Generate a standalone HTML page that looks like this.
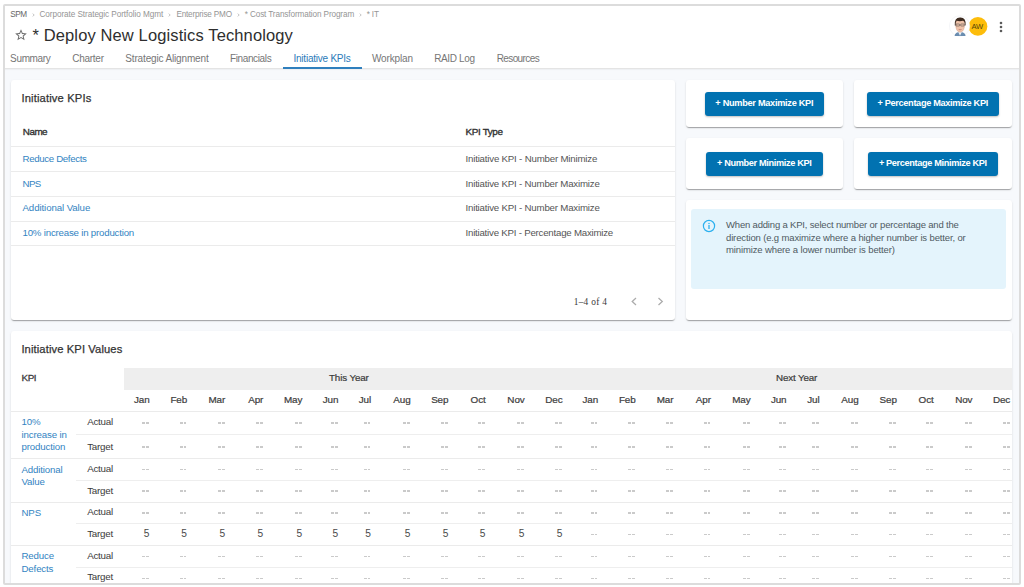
<!DOCTYPE html>
<html><head><meta charset="utf-8"><style>
html,body{margin:0;padding:0}
body{width:1024px;height:587px;overflow:hidden;position:relative;background:#fff;font-family:"Liberation Sans", sans-serif}
.t{position:absolute;white-space:pre}
</style></head><body>
<div style="position:absolute;left:5px;top:6px;width:1014px;height:577px;background:#f7f9fc"></div>
<div style="position:absolute;left:5px;top:6px;width:1014px;height:62px;background:#fff;border-bottom:1px solid #e4e4e4;box-shadow:0 1px 1px rgba(0,0,0,.035)"></div>
<div style="position:absolute;left:282.5px;top:67px;width:79px;height:2px;background:#2f7fbd"></div>
<div style="position:absolute;left:11px;top:80px;width:664px;height:240px;box-shadow:0 2px 1px -1px rgba(0,0,0,.2),0 1px 1px 0 rgba(0,0,0,.14),0 1px 3px 0 rgba(0,0,0,.08);border-radius:3px;background:#fff;"></div>
<div style="position:absolute;left:686px;top:80px;width:157px;height:47px;box-shadow:0 2px 1px -1px rgba(0,0,0,.2),0 1px 1px 0 rgba(0,0,0,.14),0 1px 3px 0 rgba(0,0,0,.08);border-radius:3px;background:#fff;"></div>
<div style="position:absolute;left:854px;top:80px;width:158px;height:47px;box-shadow:0 2px 1px -1px rgba(0,0,0,.2),0 1px 1px 0 rgba(0,0,0,.14),0 1px 3px 0 rgba(0,0,0,.08);border-radius:3px;background:#fff;"></div>
<div style="position:absolute;left:686px;top:138px;width:157px;height:51px;box-shadow:0 2px 1px -1px rgba(0,0,0,.2),0 1px 1px 0 rgba(0,0,0,.14),0 1px 3px 0 rgba(0,0,0,.08);border-radius:3px;background:#fff;"></div>
<div style="position:absolute;left:854px;top:138px;width:158px;height:51px;box-shadow:0 2px 1px -1px rgba(0,0,0,.2),0 1px 1px 0 rgba(0,0,0,.14),0 1px 3px 0 rgba(0,0,0,.08);border-radius:3px;background:#fff;"></div>
<div style="position:absolute;left:686px;top:200px;width:326px;height:120px;box-shadow:0 2px 1px -1px rgba(0,0,0,.2),0 1px 1px 0 rgba(0,0,0,.14),0 1px 3px 0 rgba(0,0,0,.08);border-radius:3px;background:#fff;"></div>
<div style="position:absolute;left:11px;top:331px;width:1001px;height:253px;box-shadow:0 2px 1px -1px rgba(0,0,0,.2),0 1px 1px 0 rgba(0,0,0,.14),0 1px 3px 0 rgba(0,0,0,.08);border-radius:3px;background:#fff;border-radius:3px 3px 0 0;"></div>
<div style="position:absolute;left:705px;top:92px;width:119px;height:24px;background:#0172b1;border-radius:3px;box-shadow:0 1px 2px rgba(0,0,0,.25);"></div>
<div style="position:absolute;left:867px;top:92px;width:132px;height:24px;background:#0172b1;border-radius:3px;box-shadow:0 1px 2px rgba(0,0,0,.25);"></div>
<div style="position:absolute;left:706px;top:152px;width:117px;height:24px;background:#0172b1;border-radius:3px;box-shadow:0 1px 2px rgba(0,0,0,.25);"></div>
<div style="position:absolute;left:868px;top:152px;width:130px;height:24px;background:#0172b1;border-radius:3px;box-shadow:0 1px 2px rgba(0,0,0,.25);"></div>
<div style="position:absolute;left:691px;top:209px;width:315px;height:80px;background:#e4f4fc;border-radius:3px"></div>
<div style="position:absolute;left:11px;top:146px;width:664px;height:1px;background:#ebebeb"></div>
<div style="position:absolute;left:11px;top:171px;width:664px;height:1px;background:#ebebeb"></div>
<div style="position:absolute;left:11px;top:196px;width:664px;height:1px;background:#ebebeb"></div>
<div style="position:absolute;left:11px;top:221px;width:664px;height:1px;background:#ebebeb"></div>
<div style="position:absolute;left:11px;top:245px;width:664px;height:1px;background:#ebebeb"></div>
<div style="position:absolute;left:124px;top:368px;width:888px;height:22px;background:#eeeeee"></div>
<div style="position:absolute;left:11px;top:411px;width:1001px;height:1px;background:#ebebeb"></div>
<div style="position:absolute;left:11px;top:458px;width:1001px;height:1px;background:#ebebeb"></div>
<div style="position:absolute;left:11px;top:502px;width:1001px;height:1px;background:#ebebeb"></div>
<div style="position:absolute;left:11px;top:545px;width:1001px;height:1px;background:#ebebeb"></div>
<div style="position:absolute;left:76px;top:434px;width:936px;height:1px;background:#eeeeee"></div>
<div style="position:absolute;left:76px;top:480px;width:936px;height:1px;background:#eeeeee"></div>
<div style="position:absolute;left:76px;top:523px;width:936px;height:1px;background:#eeeeee"></div>
<div style="position:absolute;left:76px;top:567px;width:936px;height:1px;background:#eeeeee"></div>
<div class="t" style="left:10.20px;top:10.14px;font-size:8.2px;line-height:9.84px;color:#666;font-weight:400;letter-spacing:-0.397px;">SPM</div>
<div class="t" style="left:39.50px;top:10.14px;font-size:8.2px;line-height:9.84px;color:#959595;font-weight:400;letter-spacing:-0.072px;">Corporate Strategic Portfolio Mgmt</div>
<div class="t" style="left:176.40px;top:10.14px;font-size:8.2px;line-height:9.84px;color:#959595;font-weight:400;letter-spacing:-0.200px;">Enterprise PMO</div>
<div class="t" style="left:244.70px;top:10.14px;font-size:8.2px;line-height:9.84px;color:#959595;font-weight:400;letter-spacing:-0.118px;">* Cost Transformation Program</div>
<div class="t" style="left:366.70px;top:10.14px;font-size:8.2px;line-height:9.84px;color:#959595;font-weight:400;letter-spacing:-0.165px;">* IT</div>
<div class="t" style="left:32.50px;top:26.08px;font-size:16.5px;line-height:19.8px;color:#2e2e2e;font-weight:400;letter-spacing:0.119px;">* Deploy New Logistics Technology</div>
<div class="t" style="left:10.10px;top:53.03px;font-size:10px;line-height:12.0px;color:#767676;font-weight:400;letter-spacing:-0.349px;">Summary</div>
<div class="t" style="left:72.20px;top:53.03px;font-size:10px;line-height:12.0px;color:#767676;font-weight:400;letter-spacing:-0.260px;">Charter</div>
<div class="t" style="left:125.30px;top:53.03px;font-size:10px;line-height:12.0px;color:#767676;font-weight:400;letter-spacing:-0.154px;">Strategic Alignment</div>
<div class="t" style="left:229.90px;top:53.03px;font-size:10px;line-height:12.0px;color:#767676;font-weight:400;letter-spacing:-0.359px;">Financials</div>
<div class="t" style="left:293.50px;top:53.03px;font-size:10px;line-height:12.0px;color:#2b7bb9;font-weight:400;letter-spacing:-0.235px;">Initiative KPIs</div>
<div class="t" style="left:372.00px;top:53.03px;font-size:10px;line-height:12.0px;color:#767676;font-weight:400;letter-spacing:-0.138px;">Workplan</div>
<div class="t" style="left:434.20px;top:53.03px;font-size:10px;line-height:12.0px;color:#767676;font-weight:400;letter-spacing:-0.366px;">RAID Log</div>
<div class="t" style="left:496.70px;top:53.03px;font-size:10px;line-height:12.0px;color:#767676;font-weight:400;letter-spacing:-0.602px;">Resources</div>
<div class="t" style="left:21.40px;top:91.70px;font-size:11.2px;line-height:13.44px;color:#333;font-weight:400;letter-spacing:0.151px;-webkit-text-stroke:0.25px #333;">Initiative KPIs</div>
<div class="t" style="left:22.80px;top:125.83px;font-size:9.9px;line-height:11.88px;color:#333;font-weight:400;letter-spacing:-0.517px;-webkit-text-stroke:0.35px #333;">Name</div>
<div class="t" style="left:465.60px;top:125.83px;font-size:9.9px;line-height:11.88px;color:#333;font-weight:400;letter-spacing:-0.357px;-webkit-text-stroke:0.35px #333;">KPI Type</div>
<div class="t" style="left:22.50px;top:153.12px;font-size:9.7px;line-height:11.64px;color:#3384c2;font-weight:400;letter-spacing:-0.351px;">Reduce Defects</div>
<div class="t" style="left:465.50px;top:153.12px;font-size:9.7px;line-height:11.64px;color:#555;font-weight:400;letter-spacing:-0.195px;">Initiative KPI - Number Minimize</div>
<div class="t" style="left:22.50px;top:177.77px;font-size:9.7px;line-height:11.64px;color:#3384c2;font-weight:400;letter-spacing:-0.573px;">NPS</div>
<div class="t" style="left:465.50px;top:177.77px;font-size:9.7px;line-height:11.64px;color:#555;font-weight:400;letter-spacing:-0.201px;">Initiative KPI - Number Maximize</div>
<div class="t" style="left:22.50px;top:202.42px;font-size:9.7px;line-height:11.64px;color:#3384c2;font-weight:400;letter-spacing:-0.101px;">Additional Value</div>
<div class="t" style="left:465.50px;top:202.42px;font-size:9.7px;line-height:11.64px;color:#555;font-weight:400;letter-spacing:-0.201px;">Initiative KPI - Number Maximize</div>
<div class="t" style="left:22.50px;top:227.07px;font-size:9.7px;line-height:11.64px;color:#3384c2;font-weight:400;letter-spacing:-0.204px;">10% increase in production</div>
<div class="t" style="left:465.50px;top:227.07px;font-size:9.7px;line-height:11.64px;color:#555;font-weight:400;letter-spacing:-0.224px;">Initiative KPI - Percentage Maximize</div>
<div class="t" style="left:573.70px;top:296.70px;font-size:9.4px;line-height:11.28px;color:#3a3a3a;font-weight:400;letter-spacing:0.272px;font-family:'Liberation Serif',serif;">1–4 of 4</div>
<div class="t" style="left:715.30px;top:97.79px;font-size:9.2px;line-height:11.04px;color:#fff;font-weight:700;letter-spacing:-0.284px;">+ Number Maximize KPI</div>
<div class="t" style="left:877.50px;top:97.79px;font-size:9.2px;line-height:11.04px;color:#fff;font-weight:700;letter-spacing:-0.333px;">+ Percentage Maximize KPI</div>
<div class="t" style="left:716.90px;top:157.99px;font-size:9.2px;line-height:11.04px;color:#fff;font-weight:700;letter-spacing:-0.341px;">+ Number Minimize KPI</div>
<div class="t" style="left:878.90px;top:157.99px;font-size:9.2px;line-height:11.04px;color:#fff;font-weight:700;letter-spacing:-0.356px;">+ Percentage Minimize KPI</div>
<div class="t" style="left:726.00px;top:219.11px;font-size:9.5px;line-height:11.4px;color:#4f5a62;font-weight:400;letter-spacing:-0.180px;">When adding a KPI, select number or percentage and the</div>
<div class="t" style="left:726.00px;top:231.81px;font-size:9.5px;line-height:11.4px;color:#4f5a62;font-weight:400;letter-spacing:-0.136px;">direction (e.g maximize where a higher number is better, or</div>
<div class="t" style="left:726.00px;top:244.21px;font-size:9.5px;line-height:11.4px;color:#4f5a62;font-weight:400;letter-spacing:-0.122px;">minimize where a lower number is better)</div>
<div class="t" style="left:21.40px;top:342.80px;font-size:11.2px;line-height:13.44px;color:#333;font-weight:400;letter-spacing:0.111px;-webkit-text-stroke:0.25px #333;">Initiative KPI Values</div>
<div class="t" style="left:21.50px;top:372.23px;font-size:9.9px;line-height:11.88px;color:#3c3c3c;font-weight:400;letter-spacing:-0.415px;-webkit-text-stroke:0.3px #3c3c3c;">KPI</div>
<div class="t" style="left:329.00px;top:371.62px;font-size:9.8px;line-height:11.76px;color:#3a3a3a;font-weight:400;letter-spacing:-0.134px;-webkit-text-stroke:0.2px #3a3a3a;">This Year</div>
<div class="t" style="left:776.00px;top:371.62px;font-size:9.8px;line-height:11.76px;color:#3a3a3a;font-weight:400;letter-spacing:-0.138px;-webkit-text-stroke:0.2px #3a3a3a;">Next Year</div>
<svg style="position:absolute;left:630px;top:297px" width="8" height="9" viewBox="0 0 8 9"><path d="M6 1 L2.2 4.5 L6 8" fill="none" stroke="#ababab" stroke-width="1.25"/></svg>
<svg style="position:absolute;left:657px;top:297px" width="8" height="9" viewBox="0 0 8 9"><path d="M1.5 1 L5.3 4.5 L1.5 8" fill="none" stroke="#ababab" stroke-width="1.25"/></svg>
<svg style="position:absolute;left:32.1px;top:12.5px" width="3" height="4" viewBox="0 0 3 4"><path d="M0.8 0.6 L2.2 2 L0.8 3.4" fill="none" stroke="#b0b0b0" stroke-width="0.8"/></svg>
<svg style="position:absolute;left:168.0px;top:12.5px" width="3" height="4" viewBox="0 0 3 4"><path d="M0.8 0.6 L2.2 2 L0.8 3.4" fill="none" stroke="#b0b0b0" stroke-width="0.8"/></svg>
<svg style="position:absolute;left:236.8px;top:12.5px" width="3" height="4" viewBox="0 0 3 4"><path d="M0.8 0.6 L2.2 2 L0.8 3.4" fill="none" stroke="#b0b0b0" stroke-width="0.8"/></svg>
<svg style="position:absolute;left:358.6px;top:12.5px" width="3" height="4" viewBox="0 0 3 4"><path d="M0.8 0.6 L2.2 2 L0.8 3.4" fill="none" stroke="#b0b0b0" stroke-width="0.8"/></svg>
<svg style="position:absolute;left:14.3px;top:28.0px" width="14" height="14" viewBox="0 0 24 24"><path d="M22 9.24l-7.19-.62L12 2 9.19 8.63 2 9.24l5.46 4.73L5.82 21 12 17.27 18.18 21l-1.63-7.03L22 9.24zM12 15.4l-3.76 2.27 1-4.28-3.32-2.88 4.38-.38L12 6.1l1.71 4.04 4.38.38-3.32 2.88 1 4.28L12 15.4z" fill="#6c6c6c"/></svg>
<svg style="position:absolute;left:998px;top:20.5px" width="6" height="4" viewBox="0 0 6 4"><circle cx="3" cy="2" r="1.3" fill="#5a5a5a"/></svg>
<svg style="position:absolute;left:998px;top:24.6px" width="6" height="4" viewBox="0 0 6 4"><circle cx="3" cy="2" r="1.3" fill="#5a5a5a"/></svg>
<svg style="position:absolute;left:998px;top:28.7px" width="6" height="4" viewBox="0 0 6 4"><circle cx="3" cy="2" r="1.3" fill="#5a5a5a"/></svg>
<svg style="position:absolute;left:946px;top:12px" width="46" height="30" viewBox="946 12 46 30">
<circle cx="977.9" cy="26.4" r="9.45" fill="#fdbd0b"/>
<text x="977.2" y="28.6" font-family="Liberation Sans" font-size="7.6" fill="#54460a" text-anchor="middle" letter-spacing="-0.25">AW</text>
<circle cx="959.6" cy="26" r="10.2" fill="#fff" stroke="#eef0f4" stroke-width="0.6"/>
<path d="M954.6 36 Q955 32.4 960 31.8 Q965.2 32.4 965.6 36 Z" fill="#6a8db0"/>
<path d="M958.2 32 L960 35.8 L961.9 32 Z" fill="#eef2f6"/>
<path d="M955.6 22.5 Q955.3 31.8 960.1 32.3 Q964.9 31.8 964.7 22.5 Q964.4 19.6 960.1 19.7 Q955.9 19.6 955.6 22.5 Z" fill="#efc3aa" stroke="#c9927a" stroke-width="0.35"/>
<path d="M954.8 25.5 Q954.2 17.4 960.2 17.6 Q966.3 17.4 965.6 25.5 L964.8 25.3 Q964.9 21.2 963 20.8 Q959.8 21.6 956.6 20.8 Q955.5 22.2 955.6 25.4 Z" fill="#3d2b20"/>
<rect x="956" y="24" width="3.5" height="2" rx="0.3" fill="none" stroke="#3a3a3a" stroke-width="0.5"/>
<rect x="960.7" y="24" width="3.5" height="2" rx="0.3" fill="none" stroke="#3a3a3a" stroke-width="0.5"/>
<path d="M958.7 29.5 Q960.1 30 961.5 29.5" fill="none" stroke="#b0605a" stroke-width="0.6"/>
</svg>
<svg style="position:absolute;left:702px;top:218.8px" width="14" height="14" viewBox="0 0 14 14"><circle cx="7" cy="7" r="5.6" fill="none" stroke="#2bb0ef" stroke-width="1.2"/><rect x="6.35" y="6" width="1.3" height="4" fill="#2bb0ef"/><circle cx="7" cy="4.4" r="0.75" fill="#2bb0ef"/></svg>
<div class="t" style="right:874.40px;top:393.83px;font-size:9.9px;line-height:11.88px;color:#404040;font-weight:400;letter-spacing:-0.100px;-webkit-text-stroke:0.22px #404040;">Jan</div>
<div class="t" style="right:836.90px;top:393.83px;font-size:9.9px;line-height:11.88px;color:#404040;font-weight:400;letter-spacing:-0.100px;-webkit-text-stroke:0.22px #404040;">Feb</div>
<div class="t" style="right:798.80px;top:393.83px;font-size:9.9px;line-height:11.88px;color:#404040;font-weight:400;letter-spacing:-0.100px;-webkit-text-stroke:0.22px #404040;">Mar</div>
<div class="t" style="right:760.70px;top:393.83px;font-size:9.9px;line-height:11.88px;color:#404040;font-weight:400;letter-spacing:-0.100px;-webkit-text-stroke:0.22px #404040;">Apr</div>
<div class="t" style="right:721.70px;top:393.83px;font-size:9.9px;line-height:11.88px;color:#404040;font-weight:400;letter-spacing:-0.100px;-webkit-text-stroke:0.22px #404040;">May</div>
<div class="t" style="right:685.70px;top:393.83px;font-size:9.9px;line-height:11.88px;color:#404040;font-weight:400;letter-spacing:-0.100px;-webkit-text-stroke:0.22px #404040;">Jun</div>
<div class="t" style="right:652.90px;top:393.83px;font-size:9.9px;line-height:11.88px;color:#404040;font-weight:400;letter-spacing:-0.100px;-webkit-text-stroke:0.22px #404040;">Jul</div>
<div class="t" style="right:613.40px;top:393.83px;font-size:9.9px;line-height:11.88px;color:#404040;font-weight:400;letter-spacing:-0.100px;-webkit-text-stroke:0.22px #404040;">Aug</div>
<div class="t" style="right:575.60px;top:393.83px;font-size:9.9px;line-height:11.88px;color:#404040;font-weight:400;letter-spacing:-0.100px;-webkit-text-stroke:0.22px #404040;">Sep</div>
<div class="t" style="right:538.40px;top:393.83px;font-size:9.9px;line-height:11.88px;color:#404040;font-weight:400;letter-spacing:-0.100px;-webkit-text-stroke:0.22px #404040;">Oct</div>
<div class="t" style="right:499.40px;top:393.83px;font-size:9.9px;line-height:11.88px;color:#404040;font-weight:400;letter-spacing:-0.100px;-webkit-text-stroke:0.22px #404040;">Nov</div>
<div class="t" style="right:461.50px;top:393.83px;font-size:9.9px;line-height:11.88px;color:#404040;font-weight:400;letter-spacing:-0.100px;-webkit-text-stroke:0.22px #404040;">Dec</div>
<div class="t" style="right:425.90px;top:393.83px;font-size:9.9px;line-height:11.88px;color:#404040;font-weight:400;letter-spacing:-0.100px;-webkit-text-stroke:0.22px #404040;">Jan</div>
<div class="t" style="right:388.40px;top:393.83px;font-size:9.9px;line-height:11.88px;color:#404040;font-weight:400;letter-spacing:-0.100px;-webkit-text-stroke:0.22px #404040;">Feb</div>
<div class="t" style="right:350.60px;top:393.83px;font-size:9.9px;line-height:11.88px;color:#404040;font-weight:400;letter-spacing:-0.100px;-webkit-text-stroke:0.22px #404040;">Mar</div>
<div class="t" style="right:313.10px;top:393.83px;font-size:9.9px;line-height:11.88px;color:#404040;font-weight:400;letter-spacing:-0.100px;-webkit-text-stroke:0.22px #404040;">Apr</div>
<div class="t" style="right:273.50px;top:393.83px;font-size:9.9px;line-height:11.88px;color:#404040;font-weight:400;letter-spacing:-0.100px;-webkit-text-stroke:0.22px #404040;">May</div>
<div class="t" style="right:237.50px;top:393.83px;font-size:9.9px;line-height:11.88px;color:#404040;font-weight:400;letter-spacing:-0.100px;-webkit-text-stroke:0.22px #404040;">Jun</div>
<div class="t" style="right:204.40px;top:393.83px;font-size:9.9px;line-height:11.88px;color:#404040;font-weight:400;letter-spacing:-0.100px;-webkit-text-stroke:0.22px #404040;">Jul</div>
<div class="t" style="right:165.40px;top:393.83px;font-size:9.9px;line-height:11.88px;color:#404040;font-weight:400;letter-spacing:-0.100px;-webkit-text-stroke:0.22px #404040;">Aug</div>
<div class="t" style="right:127.20px;top:393.83px;font-size:9.9px;line-height:11.88px;color:#404040;font-weight:400;letter-spacing:-0.100px;-webkit-text-stroke:0.22px #404040;">Sep</div>
<div class="t" style="right:90.40px;top:393.83px;font-size:9.9px;line-height:11.88px;color:#404040;font-weight:400;letter-spacing:-0.100px;-webkit-text-stroke:0.22px #404040;">Oct</div>
<div class="t" style="right:51.60px;top:393.83px;font-size:9.9px;line-height:11.88px;color:#404040;font-weight:400;letter-spacing:-0.100px;-webkit-text-stroke:0.22px #404040;">Nov</div>
<div class="t" style="right:13.80px;top:393.83px;font-size:9.9px;line-height:11.88px;color:#404040;font-weight:400;letter-spacing:-0.100px;-webkit-text-stroke:0.22px #404040;">Dec</div>
<div class="t" style="left:21.50px;top:416.02px;font-size:9.7px;line-height:11.64px;color:#3384c2;font-weight:400;letter-spacing:-0.150px;">10%</div>
<div class="t" style="left:21.50px;top:428.62px;font-size:9.7px;line-height:11.64px;color:#3384c2;font-weight:400;letter-spacing:-0.150px;">increase in</div>
<div class="t" style="left:21.50px;top:441.12px;font-size:9.7px;line-height:11.64px;color:#3384c2;font-weight:400;letter-spacing:-0.150px;">production</div>
<div class="t" style="left:87.20px;top:416.12px;font-size:9.8px;line-height:11.76px;color:#3a3a3a;font-weight:400;letter-spacing:-0.250px;">Actual</div>
<div class="t" style="left:87.20px;top:440.52px;font-size:9.8px;line-height:11.76px;color:#3a3a3a;font-weight:400;letter-spacing:-0.250px;">Target</div>
<div style="position:absolute;left:142.20px;top:422.25px;width:6.8px;height:1.5px;background:linear-gradient(90deg,#cacaca 2.7px,transparent 2.7px,transparent 4.1px,#cacaca 4.1px)"></div>
<div style="position:absolute;left:142.20px;top:446.35px;width:6.8px;height:1.5px;background:linear-gradient(90deg,#cacaca 2.7px,transparent 2.7px,transparent 4.1px,#cacaca 4.1px)"></div>
<div style="position:absolute;left:179.70px;top:422.25px;width:6.8px;height:1.5px;background:linear-gradient(90deg,#cacaca 2.7px,transparent 2.7px,transparent 4.1px,#cacaca 4.1px)"></div>
<div style="position:absolute;left:179.70px;top:446.35px;width:6.8px;height:1.5px;background:linear-gradient(90deg,#cacaca 2.7px,transparent 2.7px,transparent 4.1px,#cacaca 4.1px)"></div>
<div style="position:absolute;left:217.80px;top:422.25px;width:6.8px;height:1.5px;background:linear-gradient(90deg,#cacaca 2.7px,transparent 2.7px,transparent 4.1px,#cacaca 4.1px)"></div>
<div style="position:absolute;left:217.80px;top:446.35px;width:6.8px;height:1.5px;background:linear-gradient(90deg,#cacaca 2.7px,transparent 2.7px,transparent 4.1px,#cacaca 4.1px)"></div>
<div style="position:absolute;left:255.90px;top:422.25px;width:6.8px;height:1.5px;background:linear-gradient(90deg,#cacaca 2.7px,transparent 2.7px,transparent 4.1px,#cacaca 4.1px)"></div>
<div style="position:absolute;left:255.90px;top:446.35px;width:6.8px;height:1.5px;background:linear-gradient(90deg,#cacaca 2.7px,transparent 2.7px,transparent 4.1px,#cacaca 4.1px)"></div>
<div style="position:absolute;left:294.90px;top:422.25px;width:6.8px;height:1.5px;background:linear-gradient(90deg,#cacaca 2.7px,transparent 2.7px,transparent 4.1px,#cacaca 4.1px)"></div>
<div style="position:absolute;left:294.90px;top:446.35px;width:6.8px;height:1.5px;background:linear-gradient(90deg,#cacaca 2.7px,transparent 2.7px,transparent 4.1px,#cacaca 4.1px)"></div>
<div style="position:absolute;left:330.90px;top:422.25px;width:6.8px;height:1.5px;background:linear-gradient(90deg,#cacaca 2.7px,transparent 2.7px,transparent 4.1px,#cacaca 4.1px)"></div>
<div style="position:absolute;left:330.90px;top:446.35px;width:6.8px;height:1.5px;background:linear-gradient(90deg,#cacaca 2.7px,transparent 2.7px,transparent 4.1px,#cacaca 4.1px)"></div>
<div style="position:absolute;left:363.70px;top:422.25px;width:6.8px;height:1.5px;background:linear-gradient(90deg,#cacaca 2.7px,transparent 2.7px,transparent 4.1px,#cacaca 4.1px)"></div>
<div style="position:absolute;left:363.70px;top:446.35px;width:6.8px;height:1.5px;background:linear-gradient(90deg,#cacaca 2.7px,transparent 2.7px,transparent 4.1px,#cacaca 4.1px)"></div>
<div style="position:absolute;left:403.20px;top:422.25px;width:6.8px;height:1.5px;background:linear-gradient(90deg,#cacaca 2.7px,transparent 2.7px,transparent 4.1px,#cacaca 4.1px)"></div>
<div style="position:absolute;left:403.20px;top:446.35px;width:6.8px;height:1.5px;background:linear-gradient(90deg,#cacaca 2.7px,transparent 2.7px,transparent 4.1px,#cacaca 4.1px)"></div>
<div style="position:absolute;left:441.00px;top:422.25px;width:6.8px;height:1.5px;background:linear-gradient(90deg,#cacaca 2.7px,transparent 2.7px,transparent 4.1px,#cacaca 4.1px)"></div>
<div style="position:absolute;left:441.00px;top:446.35px;width:6.8px;height:1.5px;background:linear-gradient(90deg,#cacaca 2.7px,transparent 2.7px,transparent 4.1px,#cacaca 4.1px)"></div>
<div style="position:absolute;left:478.20px;top:422.25px;width:6.8px;height:1.5px;background:linear-gradient(90deg,#cacaca 2.7px,transparent 2.7px,transparent 4.1px,#cacaca 4.1px)"></div>
<div style="position:absolute;left:478.20px;top:446.35px;width:6.8px;height:1.5px;background:linear-gradient(90deg,#cacaca 2.7px,transparent 2.7px,transparent 4.1px,#cacaca 4.1px)"></div>
<div style="position:absolute;left:517.20px;top:422.25px;width:6.8px;height:1.5px;background:linear-gradient(90deg,#cacaca 2.7px,transparent 2.7px,transparent 4.1px,#cacaca 4.1px)"></div>
<div style="position:absolute;left:517.20px;top:446.35px;width:6.8px;height:1.5px;background:linear-gradient(90deg,#cacaca 2.7px,transparent 2.7px,transparent 4.1px,#cacaca 4.1px)"></div>
<div style="position:absolute;left:555.10px;top:422.25px;width:6.8px;height:1.5px;background:linear-gradient(90deg,#cacaca 2.7px,transparent 2.7px,transparent 4.1px,#cacaca 4.1px)"></div>
<div style="position:absolute;left:555.10px;top:446.35px;width:6.8px;height:1.5px;background:linear-gradient(90deg,#cacaca 2.7px,transparent 2.7px,transparent 4.1px,#cacaca 4.1px)"></div>
<div style="position:absolute;left:590.70px;top:422.25px;width:6.8px;height:1.5px;background:linear-gradient(90deg,#cacaca 2.7px,transparent 2.7px,transparent 4.1px,#cacaca 4.1px)"></div>
<div style="position:absolute;left:590.70px;top:446.35px;width:6.8px;height:1.5px;background:linear-gradient(90deg,#cacaca 2.7px,transparent 2.7px,transparent 4.1px,#cacaca 4.1px)"></div>
<div style="position:absolute;left:628.20px;top:422.25px;width:6.8px;height:1.5px;background:linear-gradient(90deg,#cacaca 2.7px,transparent 2.7px,transparent 4.1px,#cacaca 4.1px)"></div>
<div style="position:absolute;left:628.20px;top:446.35px;width:6.8px;height:1.5px;background:linear-gradient(90deg,#cacaca 2.7px,transparent 2.7px,transparent 4.1px,#cacaca 4.1px)"></div>
<div style="position:absolute;left:666.00px;top:422.25px;width:6.8px;height:1.5px;background:linear-gradient(90deg,#cacaca 2.7px,transparent 2.7px,transparent 4.1px,#cacaca 4.1px)"></div>
<div style="position:absolute;left:666.00px;top:446.35px;width:6.8px;height:1.5px;background:linear-gradient(90deg,#cacaca 2.7px,transparent 2.7px,transparent 4.1px,#cacaca 4.1px)"></div>
<div style="position:absolute;left:703.50px;top:422.25px;width:6.8px;height:1.5px;background:linear-gradient(90deg,#cacaca 2.7px,transparent 2.7px,transparent 4.1px,#cacaca 4.1px)"></div>
<div style="position:absolute;left:703.50px;top:446.35px;width:6.8px;height:1.5px;background:linear-gradient(90deg,#cacaca 2.7px,transparent 2.7px,transparent 4.1px,#cacaca 4.1px)"></div>
<div style="position:absolute;left:743.10px;top:422.25px;width:6.8px;height:1.5px;background:linear-gradient(90deg,#cacaca 2.7px,transparent 2.7px,transparent 4.1px,#cacaca 4.1px)"></div>
<div style="position:absolute;left:743.10px;top:446.35px;width:6.8px;height:1.5px;background:linear-gradient(90deg,#cacaca 2.7px,transparent 2.7px,transparent 4.1px,#cacaca 4.1px)"></div>
<div style="position:absolute;left:779.10px;top:422.25px;width:6.8px;height:1.5px;background:linear-gradient(90deg,#cacaca 2.7px,transparent 2.7px,transparent 4.1px,#cacaca 4.1px)"></div>
<div style="position:absolute;left:779.10px;top:446.35px;width:6.8px;height:1.5px;background:linear-gradient(90deg,#cacaca 2.7px,transparent 2.7px,transparent 4.1px,#cacaca 4.1px)"></div>
<div style="position:absolute;left:812.20px;top:422.25px;width:6.8px;height:1.5px;background:linear-gradient(90deg,#cacaca 2.7px,transparent 2.7px,transparent 4.1px,#cacaca 4.1px)"></div>
<div style="position:absolute;left:812.20px;top:446.35px;width:6.8px;height:1.5px;background:linear-gradient(90deg,#cacaca 2.7px,transparent 2.7px,transparent 4.1px,#cacaca 4.1px)"></div>
<div style="position:absolute;left:851.20px;top:422.25px;width:6.8px;height:1.5px;background:linear-gradient(90deg,#cacaca 2.7px,transparent 2.7px,transparent 4.1px,#cacaca 4.1px)"></div>
<div style="position:absolute;left:851.20px;top:446.35px;width:6.8px;height:1.5px;background:linear-gradient(90deg,#cacaca 2.7px,transparent 2.7px,transparent 4.1px,#cacaca 4.1px)"></div>
<div style="position:absolute;left:889.40px;top:422.25px;width:6.8px;height:1.5px;background:linear-gradient(90deg,#cacaca 2.7px,transparent 2.7px,transparent 4.1px,#cacaca 4.1px)"></div>
<div style="position:absolute;left:889.40px;top:446.35px;width:6.8px;height:1.5px;background:linear-gradient(90deg,#cacaca 2.7px,transparent 2.7px,transparent 4.1px,#cacaca 4.1px)"></div>
<div style="position:absolute;left:926.20px;top:422.25px;width:6.8px;height:1.5px;background:linear-gradient(90deg,#cacaca 2.7px,transparent 2.7px,transparent 4.1px,#cacaca 4.1px)"></div>
<div style="position:absolute;left:926.20px;top:446.35px;width:6.8px;height:1.5px;background:linear-gradient(90deg,#cacaca 2.7px,transparent 2.7px,transparent 4.1px,#cacaca 4.1px)"></div>
<div style="position:absolute;left:965.00px;top:422.25px;width:6.8px;height:1.5px;background:linear-gradient(90deg,#cacaca 2.7px,transparent 2.7px,transparent 4.1px,#cacaca 4.1px)"></div>
<div style="position:absolute;left:965.00px;top:446.35px;width:6.8px;height:1.5px;background:linear-gradient(90deg,#cacaca 2.7px,transparent 2.7px,transparent 4.1px,#cacaca 4.1px)"></div>
<div style="position:absolute;left:1002.80px;top:422.25px;width:6.8px;height:1.5px;background:linear-gradient(90deg,#cacaca 2.7px,transparent 2.7px,transparent 4.1px,#cacaca 4.1px)"></div>
<div style="position:absolute;left:1002.80px;top:446.35px;width:6.8px;height:1.5px;background:linear-gradient(90deg,#cacaca 2.7px,transparent 2.7px,transparent 4.1px,#cacaca 4.1px)"></div>
<div class="t" style="left:21.50px;top:463.62px;font-size:9.7px;line-height:11.64px;color:#3384c2;font-weight:400;letter-spacing:-0.150px;">Additional</div>
<div class="t" style="left:21.50px;top:475.92px;font-size:9.7px;line-height:11.64px;color:#3384c2;font-weight:400;letter-spacing:-0.150px;">Value</div>
<div class="t" style="left:87.20px;top:463.02px;font-size:9.8px;line-height:11.76px;color:#3a3a3a;font-weight:400;letter-spacing:-0.250px;">Actual</div>
<div class="t" style="left:87.20px;top:484.72px;font-size:9.8px;line-height:11.76px;color:#3a3a3a;font-weight:400;letter-spacing:-0.250px;">Target</div>
<div style="position:absolute;left:142.20px;top:468.75px;width:6.8px;height:1.5px;background:linear-gradient(90deg,#cacaca 2.7px,transparent 2.7px,transparent 4.1px,#cacaca 4.1px)"></div>
<div style="position:absolute;left:142.20px;top:490.05px;width:6.8px;height:1.5px;background:linear-gradient(90deg,#cacaca 2.7px,transparent 2.7px,transparent 4.1px,#cacaca 4.1px)"></div>
<div style="position:absolute;left:179.70px;top:468.75px;width:6.8px;height:1.5px;background:linear-gradient(90deg,#cacaca 2.7px,transparent 2.7px,transparent 4.1px,#cacaca 4.1px)"></div>
<div style="position:absolute;left:179.70px;top:490.05px;width:6.8px;height:1.5px;background:linear-gradient(90deg,#cacaca 2.7px,transparent 2.7px,transparent 4.1px,#cacaca 4.1px)"></div>
<div style="position:absolute;left:217.80px;top:468.75px;width:6.8px;height:1.5px;background:linear-gradient(90deg,#cacaca 2.7px,transparent 2.7px,transparent 4.1px,#cacaca 4.1px)"></div>
<div style="position:absolute;left:217.80px;top:490.05px;width:6.8px;height:1.5px;background:linear-gradient(90deg,#cacaca 2.7px,transparent 2.7px,transparent 4.1px,#cacaca 4.1px)"></div>
<div style="position:absolute;left:255.90px;top:468.75px;width:6.8px;height:1.5px;background:linear-gradient(90deg,#cacaca 2.7px,transparent 2.7px,transparent 4.1px,#cacaca 4.1px)"></div>
<div style="position:absolute;left:255.90px;top:490.05px;width:6.8px;height:1.5px;background:linear-gradient(90deg,#cacaca 2.7px,transparent 2.7px,transparent 4.1px,#cacaca 4.1px)"></div>
<div style="position:absolute;left:294.90px;top:468.75px;width:6.8px;height:1.5px;background:linear-gradient(90deg,#cacaca 2.7px,transparent 2.7px,transparent 4.1px,#cacaca 4.1px)"></div>
<div style="position:absolute;left:294.90px;top:490.05px;width:6.8px;height:1.5px;background:linear-gradient(90deg,#cacaca 2.7px,transparent 2.7px,transparent 4.1px,#cacaca 4.1px)"></div>
<div style="position:absolute;left:330.90px;top:468.75px;width:6.8px;height:1.5px;background:linear-gradient(90deg,#cacaca 2.7px,transparent 2.7px,transparent 4.1px,#cacaca 4.1px)"></div>
<div style="position:absolute;left:330.90px;top:490.05px;width:6.8px;height:1.5px;background:linear-gradient(90deg,#cacaca 2.7px,transparent 2.7px,transparent 4.1px,#cacaca 4.1px)"></div>
<div style="position:absolute;left:363.70px;top:468.75px;width:6.8px;height:1.5px;background:linear-gradient(90deg,#cacaca 2.7px,transparent 2.7px,transparent 4.1px,#cacaca 4.1px)"></div>
<div style="position:absolute;left:363.70px;top:490.05px;width:6.8px;height:1.5px;background:linear-gradient(90deg,#cacaca 2.7px,transparent 2.7px,transparent 4.1px,#cacaca 4.1px)"></div>
<div style="position:absolute;left:403.20px;top:468.75px;width:6.8px;height:1.5px;background:linear-gradient(90deg,#cacaca 2.7px,transparent 2.7px,transparent 4.1px,#cacaca 4.1px)"></div>
<div style="position:absolute;left:403.20px;top:490.05px;width:6.8px;height:1.5px;background:linear-gradient(90deg,#cacaca 2.7px,transparent 2.7px,transparent 4.1px,#cacaca 4.1px)"></div>
<div style="position:absolute;left:441.00px;top:468.75px;width:6.8px;height:1.5px;background:linear-gradient(90deg,#cacaca 2.7px,transparent 2.7px,transparent 4.1px,#cacaca 4.1px)"></div>
<div style="position:absolute;left:441.00px;top:490.05px;width:6.8px;height:1.5px;background:linear-gradient(90deg,#cacaca 2.7px,transparent 2.7px,transparent 4.1px,#cacaca 4.1px)"></div>
<div style="position:absolute;left:478.20px;top:468.75px;width:6.8px;height:1.5px;background:linear-gradient(90deg,#cacaca 2.7px,transparent 2.7px,transparent 4.1px,#cacaca 4.1px)"></div>
<div style="position:absolute;left:478.20px;top:490.05px;width:6.8px;height:1.5px;background:linear-gradient(90deg,#cacaca 2.7px,transparent 2.7px,transparent 4.1px,#cacaca 4.1px)"></div>
<div style="position:absolute;left:517.20px;top:468.75px;width:6.8px;height:1.5px;background:linear-gradient(90deg,#cacaca 2.7px,transparent 2.7px,transparent 4.1px,#cacaca 4.1px)"></div>
<div style="position:absolute;left:517.20px;top:490.05px;width:6.8px;height:1.5px;background:linear-gradient(90deg,#cacaca 2.7px,transparent 2.7px,transparent 4.1px,#cacaca 4.1px)"></div>
<div style="position:absolute;left:555.10px;top:468.75px;width:6.8px;height:1.5px;background:linear-gradient(90deg,#cacaca 2.7px,transparent 2.7px,transparent 4.1px,#cacaca 4.1px)"></div>
<div style="position:absolute;left:555.10px;top:490.05px;width:6.8px;height:1.5px;background:linear-gradient(90deg,#cacaca 2.7px,transparent 2.7px,transparent 4.1px,#cacaca 4.1px)"></div>
<div style="position:absolute;left:590.70px;top:468.75px;width:6.8px;height:1.5px;background:linear-gradient(90deg,#cacaca 2.7px,transparent 2.7px,transparent 4.1px,#cacaca 4.1px)"></div>
<div style="position:absolute;left:590.70px;top:490.05px;width:6.8px;height:1.5px;background:linear-gradient(90deg,#cacaca 2.7px,transparent 2.7px,transparent 4.1px,#cacaca 4.1px)"></div>
<div style="position:absolute;left:628.20px;top:468.75px;width:6.8px;height:1.5px;background:linear-gradient(90deg,#cacaca 2.7px,transparent 2.7px,transparent 4.1px,#cacaca 4.1px)"></div>
<div style="position:absolute;left:628.20px;top:490.05px;width:6.8px;height:1.5px;background:linear-gradient(90deg,#cacaca 2.7px,transparent 2.7px,transparent 4.1px,#cacaca 4.1px)"></div>
<div style="position:absolute;left:666.00px;top:468.75px;width:6.8px;height:1.5px;background:linear-gradient(90deg,#cacaca 2.7px,transparent 2.7px,transparent 4.1px,#cacaca 4.1px)"></div>
<div style="position:absolute;left:666.00px;top:490.05px;width:6.8px;height:1.5px;background:linear-gradient(90deg,#cacaca 2.7px,transparent 2.7px,transparent 4.1px,#cacaca 4.1px)"></div>
<div style="position:absolute;left:703.50px;top:468.75px;width:6.8px;height:1.5px;background:linear-gradient(90deg,#cacaca 2.7px,transparent 2.7px,transparent 4.1px,#cacaca 4.1px)"></div>
<div style="position:absolute;left:703.50px;top:490.05px;width:6.8px;height:1.5px;background:linear-gradient(90deg,#cacaca 2.7px,transparent 2.7px,transparent 4.1px,#cacaca 4.1px)"></div>
<div style="position:absolute;left:743.10px;top:468.75px;width:6.8px;height:1.5px;background:linear-gradient(90deg,#cacaca 2.7px,transparent 2.7px,transparent 4.1px,#cacaca 4.1px)"></div>
<div style="position:absolute;left:743.10px;top:490.05px;width:6.8px;height:1.5px;background:linear-gradient(90deg,#cacaca 2.7px,transparent 2.7px,transparent 4.1px,#cacaca 4.1px)"></div>
<div style="position:absolute;left:779.10px;top:468.75px;width:6.8px;height:1.5px;background:linear-gradient(90deg,#cacaca 2.7px,transparent 2.7px,transparent 4.1px,#cacaca 4.1px)"></div>
<div style="position:absolute;left:779.10px;top:490.05px;width:6.8px;height:1.5px;background:linear-gradient(90deg,#cacaca 2.7px,transparent 2.7px,transparent 4.1px,#cacaca 4.1px)"></div>
<div style="position:absolute;left:812.20px;top:468.75px;width:6.8px;height:1.5px;background:linear-gradient(90deg,#cacaca 2.7px,transparent 2.7px,transparent 4.1px,#cacaca 4.1px)"></div>
<div style="position:absolute;left:812.20px;top:490.05px;width:6.8px;height:1.5px;background:linear-gradient(90deg,#cacaca 2.7px,transparent 2.7px,transparent 4.1px,#cacaca 4.1px)"></div>
<div style="position:absolute;left:851.20px;top:468.75px;width:6.8px;height:1.5px;background:linear-gradient(90deg,#cacaca 2.7px,transparent 2.7px,transparent 4.1px,#cacaca 4.1px)"></div>
<div style="position:absolute;left:851.20px;top:490.05px;width:6.8px;height:1.5px;background:linear-gradient(90deg,#cacaca 2.7px,transparent 2.7px,transparent 4.1px,#cacaca 4.1px)"></div>
<div style="position:absolute;left:889.40px;top:468.75px;width:6.8px;height:1.5px;background:linear-gradient(90deg,#cacaca 2.7px,transparent 2.7px,transparent 4.1px,#cacaca 4.1px)"></div>
<div style="position:absolute;left:889.40px;top:490.05px;width:6.8px;height:1.5px;background:linear-gradient(90deg,#cacaca 2.7px,transparent 2.7px,transparent 4.1px,#cacaca 4.1px)"></div>
<div style="position:absolute;left:926.20px;top:468.75px;width:6.8px;height:1.5px;background:linear-gradient(90deg,#cacaca 2.7px,transparent 2.7px,transparent 4.1px,#cacaca 4.1px)"></div>
<div style="position:absolute;left:926.20px;top:490.05px;width:6.8px;height:1.5px;background:linear-gradient(90deg,#cacaca 2.7px,transparent 2.7px,transparent 4.1px,#cacaca 4.1px)"></div>
<div style="position:absolute;left:965.00px;top:468.75px;width:6.8px;height:1.5px;background:linear-gradient(90deg,#cacaca 2.7px,transparent 2.7px,transparent 4.1px,#cacaca 4.1px)"></div>
<div style="position:absolute;left:965.00px;top:490.05px;width:6.8px;height:1.5px;background:linear-gradient(90deg,#cacaca 2.7px,transparent 2.7px,transparent 4.1px,#cacaca 4.1px)"></div>
<div style="position:absolute;left:1002.80px;top:468.75px;width:6.8px;height:1.5px;background:linear-gradient(90deg,#cacaca 2.7px,transparent 2.7px,transparent 4.1px,#cacaca 4.1px)"></div>
<div style="position:absolute;left:1002.80px;top:490.05px;width:6.8px;height:1.5px;background:linear-gradient(90deg,#cacaca 2.7px,transparent 2.7px,transparent 4.1px,#cacaca 4.1px)"></div>
<div class="t" style="left:21.50px;top:506.72px;font-size:9.7px;line-height:11.64px;color:#3384c2;font-weight:400;letter-spacing:-0.150px;">NPS</div>
<div class="t" style="left:87.20px;top:506.12px;font-size:9.8px;line-height:11.76px;color:#3a3a3a;font-weight:400;letter-spacing:-0.250px;">Actual</div>
<div class="t" style="left:87.20px;top:527.52px;font-size:9.8px;line-height:11.76px;color:#3a3a3a;font-weight:400;letter-spacing:-0.250px;">Target</div>
<div style="position:absolute;left:142.20px;top:512.35px;width:6.8px;height:1.5px;background:linear-gradient(90deg,#cacaca 2.7px,transparent 2.7px,transparent 4.1px,#cacaca 4.1px)"></div>
<div class="t" style="right:874.50px;top:528.15px;font-size:10.2px;line-height:12.24px;color:#4a4a4a;font-weight:400;letter-spacing:0.000px;">5</div>
<div style="position:absolute;left:179.70px;top:512.35px;width:6.8px;height:1.5px;background:linear-gradient(90deg,#cacaca 2.7px,transparent 2.7px,transparent 4.1px,#cacaca 4.1px)"></div>
<div class="t" style="right:837.00px;top:528.15px;font-size:10.2px;line-height:12.24px;color:#4a4a4a;font-weight:400;letter-spacing:0.000px;">5</div>
<div style="position:absolute;left:217.80px;top:512.35px;width:6.8px;height:1.5px;background:linear-gradient(90deg,#cacaca 2.7px,transparent 2.7px,transparent 4.1px,#cacaca 4.1px)"></div>
<div class="t" style="right:798.90px;top:528.15px;font-size:10.2px;line-height:12.24px;color:#4a4a4a;font-weight:400;letter-spacing:0.000px;">5</div>
<div style="position:absolute;left:255.90px;top:512.35px;width:6.8px;height:1.5px;background:linear-gradient(90deg,#cacaca 2.7px,transparent 2.7px,transparent 4.1px,#cacaca 4.1px)"></div>
<div class="t" style="right:760.80px;top:528.15px;font-size:10.2px;line-height:12.24px;color:#4a4a4a;font-weight:400;letter-spacing:0.000px;">5</div>
<div style="position:absolute;left:294.90px;top:512.35px;width:6.8px;height:1.5px;background:linear-gradient(90deg,#cacaca 2.7px,transparent 2.7px,transparent 4.1px,#cacaca 4.1px)"></div>
<div class="t" style="right:721.80px;top:528.15px;font-size:10.2px;line-height:12.24px;color:#4a4a4a;font-weight:400;letter-spacing:0.000px;">5</div>
<div style="position:absolute;left:330.90px;top:512.35px;width:6.8px;height:1.5px;background:linear-gradient(90deg,#cacaca 2.7px,transparent 2.7px,transparent 4.1px,#cacaca 4.1px)"></div>
<div class="t" style="right:685.80px;top:528.15px;font-size:10.2px;line-height:12.24px;color:#4a4a4a;font-weight:400;letter-spacing:0.000px;">5</div>
<div style="position:absolute;left:363.70px;top:512.35px;width:6.8px;height:1.5px;background:linear-gradient(90deg,#cacaca 2.7px,transparent 2.7px,transparent 4.1px,#cacaca 4.1px)"></div>
<div class="t" style="right:653.00px;top:528.15px;font-size:10.2px;line-height:12.24px;color:#4a4a4a;font-weight:400;letter-spacing:0.000px;">5</div>
<div style="position:absolute;left:403.20px;top:512.35px;width:6.8px;height:1.5px;background:linear-gradient(90deg,#cacaca 2.7px,transparent 2.7px,transparent 4.1px,#cacaca 4.1px)"></div>
<div class="t" style="right:613.50px;top:528.15px;font-size:10.2px;line-height:12.24px;color:#4a4a4a;font-weight:400;letter-spacing:0.000px;">5</div>
<div style="position:absolute;left:441.00px;top:512.35px;width:6.8px;height:1.5px;background:linear-gradient(90deg,#cacaca 2.7px,transparent 2.7px,transparent 4.1px,#cacaca 4.1px)"></div>
<div class="t" style="right:575.70px;top:528.15px;font-size:10.2px;line-height:12.24px;color:#4a4a4a;font-weight:400;letter-spacing:0.000px;">5</div>
<div style="position:absolute;left:478.20px;top:512.35px;width:6.8px;height:1.5px;background:linear-gradient(90deg,#cacaca 2.7px,transparent 2.7px,transparent 4.1px,#cacaca 4.1px)"></div>
<div class="t" style="right:538.50px;top:528.15px;font-size:10.2px;line-height:12.24px;color:#4a4a4a;font-weight:400;letter-spacing:0.000px;">5</div>
<div style="position:absolute;left:517.20px;top:512.35px;width:6.8px;height:1.5px;background:linear-gradient(90deg,#cacaca 2.7px,transparent 2.7px,transparent 4.1px,#cacaca 4.1px)"></div>
<div class="t" style="right:499.50px;top:528.15px;font-size:10.2px;line-height:12.24px;color:#4a4a4a;font-weight:400;letter-spacing:0.000px;">5</div>
<div style="position:absolute;left:555.10px;top:512.35px;width:6.8px;height:1.5px;background:linear-gradient(90deg,#cacaca 2.7px,transparent 2.7px,transparent 4.1px,#cacaca 4.1px)"></div>
<div class="t" style="right:461.60px;top:528.15px;font-size:10.2px;line-height:12.24px;color:#4a4a4a;font-weight:400;letter-spacing:0.000px;">5</div>
<div style="position:absolute;left:590.70px;top:512.35px;width:6.8px;height:1.5px;background:linear-gradient(90deg,#cacaca 2.7px,transparent 2.7px,transparent 4.1px,#cacaca 4.1px)"></div>
<div style="position:absolute;left:590.70px;top:533.65px;width:6.8px;height:1.5px;background:linear-gradient(90deg,#cacaca 2.7px,transparent 2.7px,transparent 4.1px,#cacaca 4.1px)"></div>
<div style="position:absolute;left:628.20px;top:512.35px;width:6.8px;height:1.5px;background:linear-gradient(90deg,#cacaca 2.7px,transparent 2.7px,transparent 4.1px,#cacaca 4.1px)"></div>
<div style="position:absolute;left:628.20px;top:533.65px;width:6.8px;height:1.5px;background:linear-gradient(90deg,#cacaca 2.7px,transparent 2.7px,transparent 4.1px,#cacaca 4.1px)"></div>
<div style="position:absolute;left:666.00px;top:512.35px;width:6.8px;height:1.5px;background:linear-gradient(90deg,#cacaca 2.7px,transparent 2.7px,transparent 4.1px,#cacaca 4.1px)"></div>
<div style="position:absolute;left:666.00px;top:533.65px;width:6.8px;height:1.5px;background:linear-gradient(90deg,#cacaca 2.7px,transparent 2.7px,transparent 4.1px,#cacaca 4.1px)"></div>
<div style="position:absolute;left:703.50px;top:512.35px;width:6.8px;height:1.5px;background:linear-gradient(90deg,#cacaca 2.7px,transparent 2.7px,transparent 4.1px,#cacaca 4.1px)"></div>
<div style="position:absolute;left:703.50px;top:533.65px;width:6.8px;height:1.5px;background:linear-gradient(90deg,#cacaca 2.7px,transparent 2.7px,transparent 4.1px,#cacaca 4.1px)"></div>
<div style="position:absolute;left:743.10px;top:512.35px;width:6.8px;height:1.5px;background:linear-gradient(90deg,#cacaca 2.7px,transparent 2.7px,transparent 4.1px,#cacaca 4.1px)"></div>
<div style="position:absolute;left:743.10px;top:533.65px;width:6.8px;height:1.5px;background:linear-gradient(90deg,#cacaca 2.7px,transparent 2.7px,transparent 4.1px,#cacaca 4.1px)"></div>
<div style="position:absolute;left:779.10px;top:512.35px;width:6.8px;height:1.5px;background:linear-gradient(90deg,#cacaca 2.7px,transparent 2.7px,transparent 4.1px,#cacaca 4.1px)"></div>
<div style="position:absolute;left:779.10px;top:533.65px;width:6.8px;height:1.5px;background:linear-gradient(90deg,#cacaca 2.7px,transparent 2.7px,transparent 4.1px,#cacaca 4.1px)"></div>
<div style="position:absolute;left:812.20px;top:512.35px;width:6.8px;height:1.5px;background:linear-gradient(90deg,#cacaca 2.7px,transparent 2.7px,transparent 4.1px,#cacaca 4.1px)"></div>
<div style="position:absolute;left:812.20px;top:533.65px;width:6.8px;height:1.5px;background:linear-gradient(90deg,#cacaca 2.7px,transparent 2.7px,transparent 4.1px,#cacaca 4.1px)"></div>
<div style="position:absolute;left:851.20px;top:512.35px;width:6.8px;height:1.5px;background:linear-gradient(90deg,#cacaca 2.7px,transparent 2.7px,transparent 4.1px,#cacaca 4.1px)"></div>
<div style="position:absolute;left:851.20px;top:533.65px;width:6.8px;height:1.5px;background:linear-gradient(90deg,#cacaca 2.7px,transparent 2.7px,transparent 4.1px,#cacaca 4.1px)"></div>
<div style="position:absolute;left:889.40px;top:512.35px;width:6.8px;height:1.5px;background:linear-gradient(90deg,#cacaca 2.7px,transparent 2.7px,transparent 4.1px,#cacaca 4.1px)"></div>
<div style="position:absolute;left:889.40px;top:533.65px;width:6.8px;height:1.5px;background:linear-gradient(90deg,#cacaca 2.7px,transparent 2.7px,transparent 4.1px,#cacaca 4.1px)"></div>
<div style="position:absolute;left:926.20px;top:512.35px;width:6.8px;height:1.5px;background:linear-gradient(90deg,#cacaca 2.7px,transparent 2.7px,transparent 4.1px,#cacaca 4.1px)"></div>
<div style="position:absolute;left:926.20px;top:533.65px;width:6.8px;height:1.5px;background:linear-gradient(90deg,#cacaca 2.7px,transparent 2.7px,transparent 4.1px,#cacaca 4.1px)"></div>
<div style="position:absolute;left:965.00px;top:512.35px;width:6.8px;height:1.5px;background:linear-gradient(90deg,#cacaca 2.7px,transparent 2.7px,transparent 4.1px,#cacaca 4.1px)"></div>
<div style="position:absolute;left:965.00px;top:533.65px;width:6.8px;height:1.5px;background:linear-gradient(90deg,#cacaca 2.7px,transparent 2.7px,transparent 4.1px,#cacaca 4.1px)"></div>
<div style="position:absolute;left:1002.80px;top:512.35px;width:6.8px;height:1.5px;background:linear-gradient(90deg,#cacaca 2.7px,transparent 2.7px,transparent 4.1px,#cacaca 4.1px)"></div>
<div style="position:absolute;left:1002.80px;top:533.65px;width:6.8px;height:1.5px;background:linear-gradient(90deg,#cacaca 2.7px,transparent 2.7px,transparent 4.1px,#cacaca 4.1px)"></div>
<div class="t" style="left:21.50px;top:550.12px;font-size:9.7px;line-height:11.64px;color:#3384c2;font-weight:400;letter-spacing:-0.150px;">Reduce</div>
<div class="t" style="left:21.50px;top:562.52px;font-size:9.7px;line-height:11.64px;color:#3384c2;font-weight:400;letter-spacing:-0.150px;">Defects</div>
<div class="t" style="left:87.20px;top:549.52px;font-size:9.8px;line-height:11.76px;color:#3a3a3a;font-weight:400;letter-spacing:-0.250px;">Actual</div>
<div class="t" style="left:87.20px;top:571.02px;font-size:9.8px;line-height:11.76px;color:#3a3a3a;font-weight:400;letter-spacing:-0.250px;">Target</div>
<div style="position:absolute;left:142.20px;top:555.55px;width:6.8px;height:1.5px;background:linear-gradient(90deg,#cacaca 2.7px,transparent 2.7px,transparent 4.1px,#cacaca 4.1px)"></div>
<div style="position:absolute;left:142.20px;top:577.55px;width:6.8px;height:1.5px;background:linear-gradient(90deg,#cacaca 2.7px,transparent 2.7px,transparent 4.1px,#cacaca 4.1px)"></div>
<div style="position:absolute;left:179.70px;top:555.55px;width:6.8px;height:1.5px;background:linear-gradient(90deg,#cacaca 2.7px,transparent 2.7px,transparent 4.1px,#cacaca 4.1px)"></div>
<div style="position:absolute;left:179.70px;top:577.55px;width:6.8px;height:1.5px;background:linear-gradient(90deg,#cacaca 2.7px,transparent 2.7px,transparent 4.1px,#cacaca 4.1px)"></div>
<div style="position:absolute;left:217.80px;top:555.55px;width:6.8px;height:1.5px;background:linear-gradient(90deg,#cacaca 2.7px,transparent 2.7px,transparent 4.1px,#cacaca 4.1px)"></div>
<div style="position:absolute;left:217.80px;top:577.55px;width:6.8px;height:1.5px;background:linear-gradient(90deg,#cacaca 2.7px,transparent 2.7px,transparent 4.1px,#cacaca 4.1px)"></div>
<div style="position:absolute;left:255.90px;top:555.55px;width:6.8px;height:1.5px;background:linear-gradient(90deg,#cacaca 2.7px,transparent 2.7px,transparent 4.1px,#cacaca 4.1px)"></div>
<div style="position:absolute;left:255.90px;top:577.55px;width:6.8px;height:1.5px;background:linear-gradient(90deg,#cacaca 2.7px,transparent 2.7px,transparent 4.1px,#cacaca 4.1px)"></div>
<div style="position:absolute;left:294.90px;top:555.55px;width:6.8px;height:1.5px;background:linear-gradient(90deg,#cacaca 2.7px,transparent 2.7px,transparent 4.1px,#cacaca 4.1px)"></div>
<div style="position:absolute;left:294.90px;top:577.55px;width:6.8px;height:1.5px;background:linear-gradient(90deg,#cacaca 2.7px,transparent 2.7px,transparent 4.1px,#cacaca 4.1px)"></div>
<div style="position:absolute;left:330.90px;top:555.55px;width:6.8px;height:1.5px;background:linear-gradient(90deg,#cacaca 2.7px,transparent 2.7px,transparent 4.1px,#cacaca 4.1px)"></div>
<div style="position:absolute;left:330.90px;top:577.55px;width:6.8px;height:1.5px;background:linear-gradient(90deg,#cacaca 2.7px,transparent 2.7px,transparent 4.1px,#cacaca 4.1px)"></div>
<div style="position:absolute;left:363.70px;top:555.55px;width:6.8px;height:1.5px;background:linear-gradient(90deg,#cacaca 2.7px,transparent 2.7px,transparent 4.1px,#cacaca 4.1px)"></div>
<div style="position:absolute;left:363.70px;top:577.55px;width:6.8px;height:1.5px;background:linear-gradient(90deg,#cacaca 2.7px,transparent 2.7px,transparent 4.1px,#cacaca 4.1px)"></div>
<div style="position:absolute;left:403.20px;top:555.55px;width:6.8px;height:1.5px;background:linear-gradient(90deg,#cacaca 2.7px,transparent 2.7px,transparent 4.1px,#cacaca 4.1px)"></div>
<div style="position:absolute;left:403.20px;top:577.55px;width:6.8px;height:1.5px;background:linear-gradient(90deg,#cacaca 2.7px,transparent 2.7px,transparent 4.1px,#cacaca 4.1px)"></div>
<div style="position:absolute;left:441.00px;top:555.55px;width:6.8px;height:1.5px;background:linear-gradient(90deg,#cacaca 2.7px,transparent 2.7px,transparent 4.1px,#cacaca 4.1px)"></div>
<div style="position:absolute;left:441.00px;top:577.55px;width:6.8px;height:1.5px;background:linear-gradient(90deg,#cacaca 2.7px,transparent 2.7px,transparent 4.1px,#cacaca 4.1px)"></div>
<div style="position:absolute;left:478.20px;top:555.55px;width:6.8px;height:1.5px;background:linear-gradient(90deg,#cacaca 2.7px,transparent 2.7px,transparent 4.1px,#cacaca 4.1px)"></div>
<div style="position:absolute;left:478.20px;top:577.55px;width:6.8px;height:1.5px;background:linear-gradient(90deg,#cacaca 2.7px,transparent 2.7px,transparent 4.1px,#cacaca 4.1px)"></div>
<div style="position:absolute;left:517.20px;top:555.55px;width:6.8px;height:1.5px;background:linear-gradient(90deg,#cacaca 2.7px,transparent 2.7px,transparent 4.1px,#cacaca 4.1px)"></div>
<div style="position:absolute;left:517.20px;top:577.55px;width:6.8px;height:1.5px;background:linear-gradient(90deg,#cacaca 2.7px,transparent 2.7px,transparent 4.1px,#cacaca 4.1px)"></div>
<div style="position:absolute;left:555.10px;top:555.55px;width:6.8px;height:1.5px;background:linear-gradient(90deg,#cacaca 2.7px,transparent 2.7px,transparent 4.1px,#cacaca 4.1px)"></div>
<div style="position:absolute;left:555.10px;top:577.55px;width:6.8px;height:1.5px;background:linear-gradient(90deg,#cacaca 2.7px,transparent 2.7px,transparent 4.1px,#cacaca 4.1px)"></div>
<div style="position:absolute;left:590.70px;top:555.55px;width:6.8px;height:1.5px;background:linear-gradient(90deg,#cacaca 2.7px,transparent 2.7px,transparent 4.1px,#cacaca 4.1px)"></div>
<div style="position:absolute;left:590.70px;top:577.55px;width:6.8px;height:1.5px;background:linear-gradient(90deg,#cacaca 2.7px,transparent 2.7px,transparent 4.1px,#cacaca 4.1px)"></div>
<div style="position:absolute;left:628.20px;top:555.55px;width:6.8px;height:1.5px;background:linear-gradient(90deg,#cacaca 2.7px,transparent 2.7px,transparent 4.1px,#cacaca 4.1px)"></div>
<div style="position:absolute;left:628.20px;top:577.55px;width:6.8px;height:1.5px;background:linear-gradient(90deg,#cacaca 2.7px,transparent 2.7px,transparent 4.1px,#cacaca 4.1px)"></div>
<div style="position:absolute;left:666.00px;top:555.55px;width:6.8px;height:1.5px;background:linear-gradient(90deg,#cacaca 2.7px,transparent 2.7px,transparent 4.1px,#cacaca 4.1px)"></div>
<div style="position:absolute;left:666.00px;top:577.55px;width:6.8px;height:1.5px;background:linear-gradient(90deg,#cacaca 2.7px,transparent 2.7px,transparent 4.1px,#cacaca 4.1px)"></div>
<div style="position:absolute;left:703.50px;top:555.55px;width:6.8px;height:1.5px;background:linear-gradient(90deg,#cacaca 2.7px,transparent 2.7px,transparent 4.1px,#cacaca 4.1px)"></div>
<div style="position:absolute;left:703.50px;top:577.55px;width:6.8px;height:1.5px;background:linear-gradient(90deg,#cacaca 2.7px,transparent 2.7px,transparent 4.1px,#cacaca 4.1px)"></div>
<div style="position:absolute;left:743.10px;top:555.55px;width:6.8px;height:1.5px;background:linear-gradient(90deg,#cacaca 2.7px,transparent 2.7px,transparent 4.1px,#cacaca 4.1px)"></div>
<div style="position:absolute;left:743.10px;top:577.55px;width:6.8px;height:1.5px;background:linear-gradient(90deg,#cacaca 2.7px,transparent 2.7px,transparent 4.1px,#cacaca 4.1px)"></div>
<div style="position:absolute;left:779.10px;top:555.55px;width:6.8px;height:1.5px;background:linear-gradient(90deg,#cacaca 2.7px,transparent 2.7px,transparent 4.1px,#cacaca 4.1px)"></div>
<div style="position:absolute;left:779.10px;top:577.55px;width:6.8px;height:1.5px;background:linear-gradient(90deg,#cacaca 2.7px,transparent 2.7px,transparent 4.1px,#cacaca 4.1px)"></div>
<div style="position:absolute;left:812.20px;top:555.55px;width:6.8px;height:1.5px;background:linear-gradient(90deg,#cacaca 2.7px,transparent 2.7px,transparent 4.1px,#cacaca 4.1px)"></div>
<div style="position:absolute;left:812.20px;top:577.55px;width:6.8px;height:1.5px;background:linear-gradient(90deg,#cacaca 2.7px,transparent 2.7px,transparent 4.1px,#cacaca 4.1px)"></div>
<div style="position:absolute;left:851.20px;top:555.55px;width:6.8px;height:1.5px;background:linear-gradient(90deg,#cacaca 2.7px,transparent 2.7px,transparent 4.1px,#cacaca 4.1px)"></div>
<div style="position:absolute;left:851.20px;top:577.55px;width:6.8px;height:1.5px;background:linear-gradient(90deg,#cacaca 2.7px,transparent 2.7px,transparent 4.1px,#cacaca 4.1px)"></div>
<div style="position:absolute;left:889.40px;top:555.55px;width:6.8px;height:1.5px;background:linear-gradient(90deg,#cacaca 2.7px,transparent 2.7px,transparent 4.1px,#cacaca 4.1px)"></div>
<div style="position:absolute;left:889.40px;top:577.55px;width:6.8px;height:1.5px;background:linear-gradient(90deg,#cacaca 2.7px,transparent 2.7px,transparent 4.1px,#cacaca 4.1px)"></div>
<div style="position:absolute;left:926.20px;top:555.55px;width:6.8px;height:1.5px;background:linear-gradient(90deg,#cacaca 2.7px,transparent 2.7px,transparent 4.1px,#cacaca 4.1px)"></div>
<div style="position:absolute;left:926.20px;top:577.55px;width:6.8px;height:1.5px;background:linear-gradient(90deg,#cacaca 2.7px,transparent 2.7px,transparent 4.1px,#cacaca 4.1px)"></div>
<div style="position:absolute;left:965.00px;top:555.55px;width:6.8px;height:1.5px;background:linear-gradient(90deg,#cacaca 2.7px,transparent 2.7px,transparent 4.1px,#cacaca 4.1px)"></div>
<div style="position:absolute;left:965.00px;top:577.55px;width:6.8px;height:1.5px;background:linear-gradient(90deg,#cacaca 2.7px,transparent 2.7px,transparent 4.1px,#cacaca 4.1px)"></div>
<div style="position:absolute;left:1002.80px;top:555.55px;width:6.8px;height:1.5px;background:linear-gradient(90deg,#cacaca 2.7px,transparent 2.7px,transparent 4.1px,#cacaca 4.1px)"></div>
<div style="position:absolute;left:1002.80px;top:577.55px;width:6.8px;height:1.5px;background:linear-gradient(90deg,#cacaca 2.7px,transparent 2.7px,transparent 4.1px,#cacaca 4.1px)"></div>
<div style="position:absolute;left:0px;top:585px;width:1024px;height:2px;background:#fff"></div>
<div style="position:absolute;left:3px;top:4px;width:1018px;height:581px;box-sizing:border-box;border:2px solid #dcdcdc;border-radius:2px"></div>
</body></html>
